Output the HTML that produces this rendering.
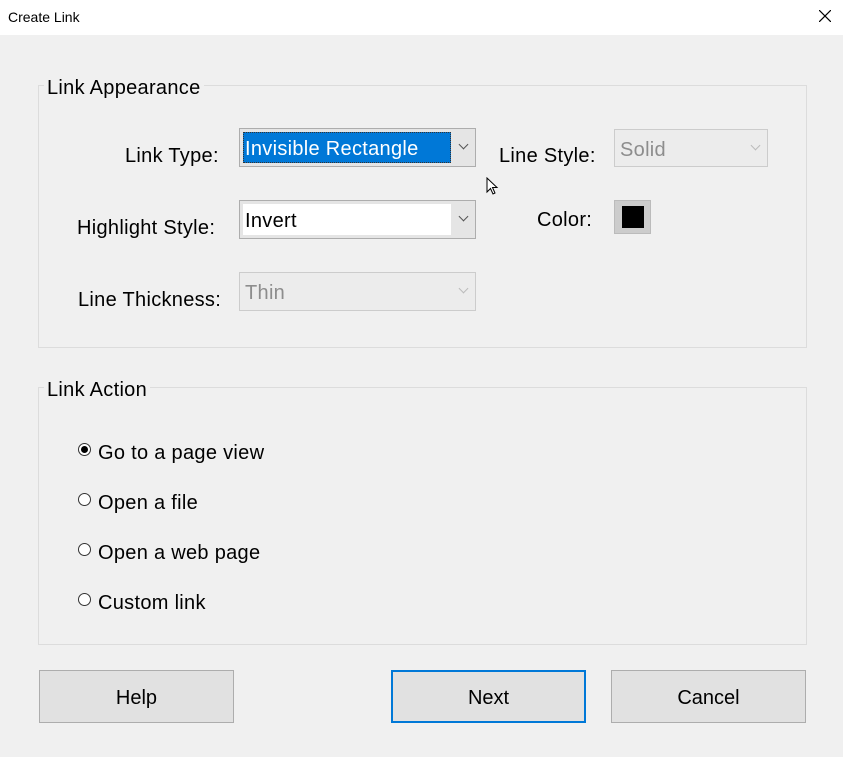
<!DOCTYPE html><html><head><style>
body{margin:0;width:843px;height:757px;background:#f0f0f0;font-family:"Liberation Sans",sans-serif;position:relative;overflow:hidden;color:#000}
.a{position:absolute}
.t{font-size:20px;white-space:nowrap;letter-spacing:0.3px}
.g{border:1px solid #dcdcdc}
.cb{border:1px solid #adadad;background:#e5e5e5;box-sizing:border-box}
.cb .in{position:absolute;left:3px;top:3px;bottom:3px;right:24px;font-size:20px;line-height:34px;padding-left:2px;letter-spacing:0.3px}
.cb .ar{position:absolute;right:8px;top:12px;width:6px;height:6px;border-right:1px solid #555;border-bottom:1px solid #555;transform:rotate(45deg)}
.dis{border-color:#ccc;background:#ececec}
.dis .in{color:#8d8d8d;background:#ececec}
.dis .ar{border-color:#bbb}
.btn{border:1px solid #adadad;background:#e1e1e1;box-sizing:border-box;font-size:20px;text-align:center;line-height:54px}
.r{width:13px;height:13px;border:1px solid #333;border-radius:50%;background:#fff;box-sizing:border-box}
</style></head><body>
<div class="a" style="left:0;top:0;width:843px;height:35px;background:#fff"></div>
<div class="a" style="left:8px;top:9px;font-size:14px">Create Link</div>
<svg class="a" style="left:819px;top:10px" width="12" height="12" viewBox="0 0 12 12"><path d="M0 0L12 12M12 0L0 12" stroke="#000" stroke-width="1.2"/></svg>

<div class="a g" style="left:38px;top:85px;width:767px;height:261px"></div>
<div class="a t" style="left:44px;top:77px;background:#f0f0f0;padding:0 3px">Link Appearance</div>
<div class="a t" style="left:125px;top:145px">Link Type:</div>
<div class="a t" style="left:77px;top:217px">Highlight Style:</div>
<div class="a t" style="left:78px;top:289px">Line Thickness:</div>
<div class="a t" style="left:499px;top:145px">Line Style:</div>
<div class="a t" style="left:537px;top:209px">Color:</div>

<div class="a cb" style="left:239px;top:128px;width:237px;height:39px"><div class="in" style="background:#0078d7;color:#fff;outline:1px dotted #333;outline-offset:-1px">Invisible Rectangle</div><div class="ar"></div></div>
<div class="a cb" style="left:239px;top:200px;width:237px;height:39px"><div class="in" style="background:#fff">Invert</div><div class="ar"></div></div>
<div class="a cb dis" style="left:239px;top:272px;width:237px;height:39px"><div class="in">Thin</div><div class="ar"></div></div>
<div class="a cb dis" style="left:614px;top:129px;width:154px;height:38px"><div class="in">Solid</div><div class="ar"></div></div>
<div class="a" style="left:614px;top:200px;width:37px;height:34px;background:#ccc;box-sizing:border-box;border:1px solid #bbb"><div class="a" style="left:7px;top:5px;width:22px;height:22px;background:#000"></div></div>
<svg class="a" style="left:486px;top:177px" width="14" height="20" viewBox="0 0 14 20"><path d="M1 1 L1 15 L4.5 11.5 L7 17 L9 16 L6.5 10.5 L11 10.5 Z" fill="#fff" stroke="#000" stroke-width="1"/></svg>

<div class="a g" style="left:38px;top:387px;width:767px;height:256px"></div>
<div class="a t" style="left:44px;top:379px;background:#f0f0f0;padding:0 3px">Link Action</div>
<div class="a r" style="left:78px;top:443px"><div class="a" style="left:2px;top:2px;width:7px;height:7px;border-radius:50%;background:#000"></div></div>
<div class="a t" style="left:98px;top:442px">Go to a page view</div>
<div class="a r" style="left:78px;top:493px"></div>
<div class="a t" style="left:98px;top:492px">Open a file</div>
<div class="a r" style="left:78px;top:543px"></div>
<div class="a t" style="left:98px;top:542px">Open a web page</div>
<div class="a r" style="left:78px;top:593px"></div>
<div class="a t" style="left:98px;top:592px">Custom link</div>

<div class="a btn" style="left:39px;top:670px;width:195px;height:53px">Help</div>
<div class="a btn" style="left:391px;top:670px;width:195px;height:53px;border:2px solid #0078d7;line-height:53px">Next</div>
<div class="a btn" style="left:611px;top:670px;width:195px;height:53px">Cancel</div>
</body></html>
